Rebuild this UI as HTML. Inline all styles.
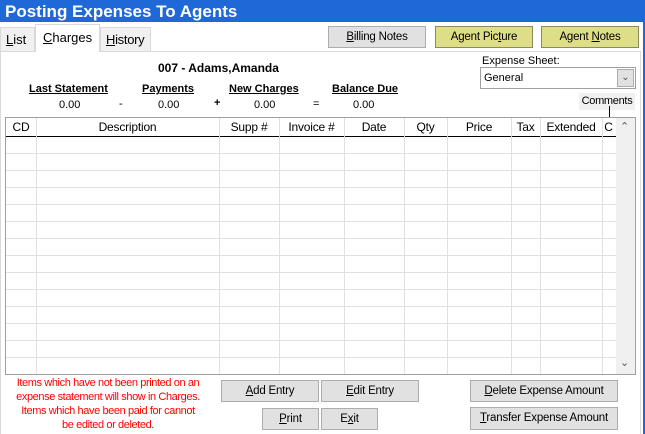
<!DOCTYPE html>
<html><head><style>
*{margin:0;padding:0;box-sizing:border-box}
body{width:645px;height:434px;background:#fff;position:relative;overflow:hidden;font-family:"Liberation Sans",Arial,sans-serif;font-size:12px;color:#000}
.a{position:absolute}
.btn{position:absolute;background:#e1e1e1;border:1px solid #adadad;text-align:center;font-size:11.5px;letter-spacing:-0.2px}
.y{background:#dede88;border-color:#8a8a60}
u{text-decoration:underline}
.hl{position:absolute;left:6px;width:610px;height:1px;background:#e0e0e0}
.vl{position:absolute;top:118px;height:256px;width:1px;background:#e0e0e0}
.h{position:absolute;top:120px;font-size:12px;text-align:center;letter-spacing:-0.2px}
</style></head><body>
<div class="a" style="left:0;top:0;width:645px;height:22px;background:#1f68d8"></div>
<div class="a" style="left:5px;top:2px;color:#fff;font-weight:bold;font-size:17px">Posting Expenses To Agents</div>
<div class="a" style="left:643px;top:22px;width:2px;height:412px;background:#1f68d8"></div>
<div class="a" style="left:0;top:22px;width:643px;height:412px;background:#fff"></div>
<div class="a" style="left:0;top:27px;width:35px;height:25px;background:#f0f0f0;border:1px solid #d9d9d9"></div>
<div class="a" style="left:6px;top:32px;font-size:13px"><u>L</u>ist</div>
<div class="a" style="left:35px;top:24px;width:65px;height:28px;background:#fff;border:1px solid #d9d9d9;border-bottom:none"></div>
<div class="a" style="left:43px;top:30px;font-size:13px"><u>C</u>harges</div>
<div class="a" style="left:100px;top:27px;width:51px;height:25px;background:#f0f0f0;border:1px solid #d9d9d9"></div>
<div class="a" style="left:106px;top:32px;font-size:13px;letter-spacing:-0.3px"><u>H</u>istory</div>
<div class="a" style="left:151px;top:51px;width:490px;height:1px;background:#d9d9d9"></div>
<div class="a" style="left:0;top:52px;width:1px;height:382px;background:#d9d9d9"></div>
<div class="a" style="left:640px;top:51px;width:1px;height:383px;background:#d9d9d9"></div>
<div class="btn" style="left:328px;top:26px;width:98px;height:22px;line-height:20px"><u>B</u>illing Notes</div>
<div class="btn y" style="left:435px;top:26px;width:98px;height:22px;line-height:20px">Agent Pic<u>t</u>ure</div>
<div class="btn y" style="left:541px;top:26px;width:98px;height:22px;line-height:20px">Agent <u>N</u>otes</div>
<div class="a" style="left:158px;top:61px;font-weight:bold;font-size:12px">007 - Adams,Amanda</div>
<div class="a" style="left:29px;top:83px;font-weight:bold;font-size:11px"><u>Last Statement</u></div>
<div class="a" style="left:142px;top:83px;font-weight:bold;font-size:11px"><u>Payments</u></div>
<div class="a" style="left:229px;top:83px;font-weight:bold;font-size:11px"><u>New Charges</u></div>
<div class="a" style="left:332px;top:83px;font-weight:bold;font-size:11px"><u>Balance Due</u></div>
<div class="a" style="left:59px;top:99px;font-size:11px">0.00</div>
<div class="a" style="left:119px;top:98px;font-size:11px">-</div>
<div class="a" style="left:158px;top:99px;font-size:11px">0.00</div>
<div class="a" style="left:214px;top:97px;font-size:11px;font-weight:bold">+</div>
<div class="a" style="left:254px;top:99px;font-size:11px">0.00</div>
<div class="a" style="left:313px;top:98px;font-size:11px">=</div>
<div class="a" style="left:353px;top:99px;font-size:11px">0.00</div>
<div class="a" style="left:482px;top:55px;font-size:11px">Expense Sheet:</div>
<div class="a" style="left:480px;top:67px;width:156px;height:22px;border:1px solid #a0a0a0;background:#fff"></div>
<div class="a" style="left:484px;top:72px;font-size:11px">General</div>
<div class="a" style="left:617px;top:69px;width:17px;height:18px;background:#e1e1e1;border:1px solid #adadad;font-size:10px;text-align:center;line-height:15px;color:#555">&#8964;</div>
<div class="a" style="left:579px;top:93px;width:56px;height:17px;background:#f0f0f0;font-size:11px;text-align:center;line-height:16px;letter-spacing:-0.3px">Comments</div>
<div class="a" style="left:609px;top:106px;width:1px;height:12px;background:#000"></div>
<div class="a" style="left:5px;top:117px;width:631px;height:258px;border:1px solid #a0a0a0;background:#fff"></div>
<div class="a" style="left:6px;top:136px;width:610px;height:1px;background:#000"></div>
<div class="hl" style="top:153px"></div><div class="hl" style="top:170px"></div><div class="hl" style="top:187px"></div><div class="hl" style="top:204px"></div><div class="hl" style="top:221px"></div><div class="hl" style="top:238px"></div><div class="hl" style="top:255px"></div><div class="hl" style="top:272px"></div><div class="hl" style="top:289px"></div><div class="hl" style="top:306px"></div><div class="hl" style="top:323px"></div><div class="hl" style="top:340px"></div><div class="hl" style="top:357px"></div>
<div class="vl" style="left:36px"></div><div class="vl" style="left:219px"></div><div class="vl" style="left:279px"></div><div class="vl" style="left:344px"></div><div class="vl" style="left:404px"></div><div class="vl" style="left:447px"></div><div class="vl" style="left:511px"></div><div class="vl" style="left:540px"></div><div class="vl" style="left:602px"></div>
<div class="h" style="left:6px;width:30px">CD</div>
<div class="h" style="left:36px;width:183px">Description</div>
<div class="h" style="left:219px;width:60px">Supp #</div>
<div class="h" style="left:279px;width:65px">Invoice #</div>
<div class="h" style="left:344px;width:60px">Date</div>
<div class="h" style="left:404px;width:43px">Qty</div>
<div class="h" style="left:447px;width:64px">Price</div>
<div class="h" style="left:511px;width:29px">Tax</div>
<div class="h" style="left:540px;width:62px">Extended</div>
<div class="h" style="left:602px;width:13px">C</div>
<div class="a" style="left:616px;top:118px;width:19px;height:256px;background:#f0f0f0"></div>
<div class="a" style="left:620px;top:120px;font-size:11px;color:#555">&#8963;</div>
<div class="a" style="left:620px;top:356px;font-size:11px;color:#555">&#8964;</div>
<div class="a" style="left:3px;top:376px;width:210px;color:#f00;font-size:11px;text-align:center;line-height:14px;letter-spacing:-0.4px;white-space:nowrap">Items which have not been printed on an<br>expense statement will show in Charges.<br>Items which have been paid for cannot<br>be edited or deleted.</div>
<div class="btn" style="left:221px;top:380px;width:98px;height:22px;line-height:20px"><u>A</u>dd Entry</div>
<div class="btn" style="left:321px;top:380px;width:98px;height:22px;line-height:20px"><u>E</u>dit Entry</div>
<div class="btn" style="left:262px;top:408px;width:57px;height:22px;line-height:20px"><u>P</u>rint</div>
<div class="btn" style="left:321px;top:408px;width:57px;height:22px;line-height:20px">E<u>x</u>it</div>
<div class="btn" style="left:470px;top:380px;width:148px;height:22px;line-height:20px"><u>D</u>elete Expense Amount</div>
<div class="btn" style="left:470px;top:407px;width:148px;height:23px;line-height:21px"><u>T</u>ransfer Expense Amount</div>
</body></html>
